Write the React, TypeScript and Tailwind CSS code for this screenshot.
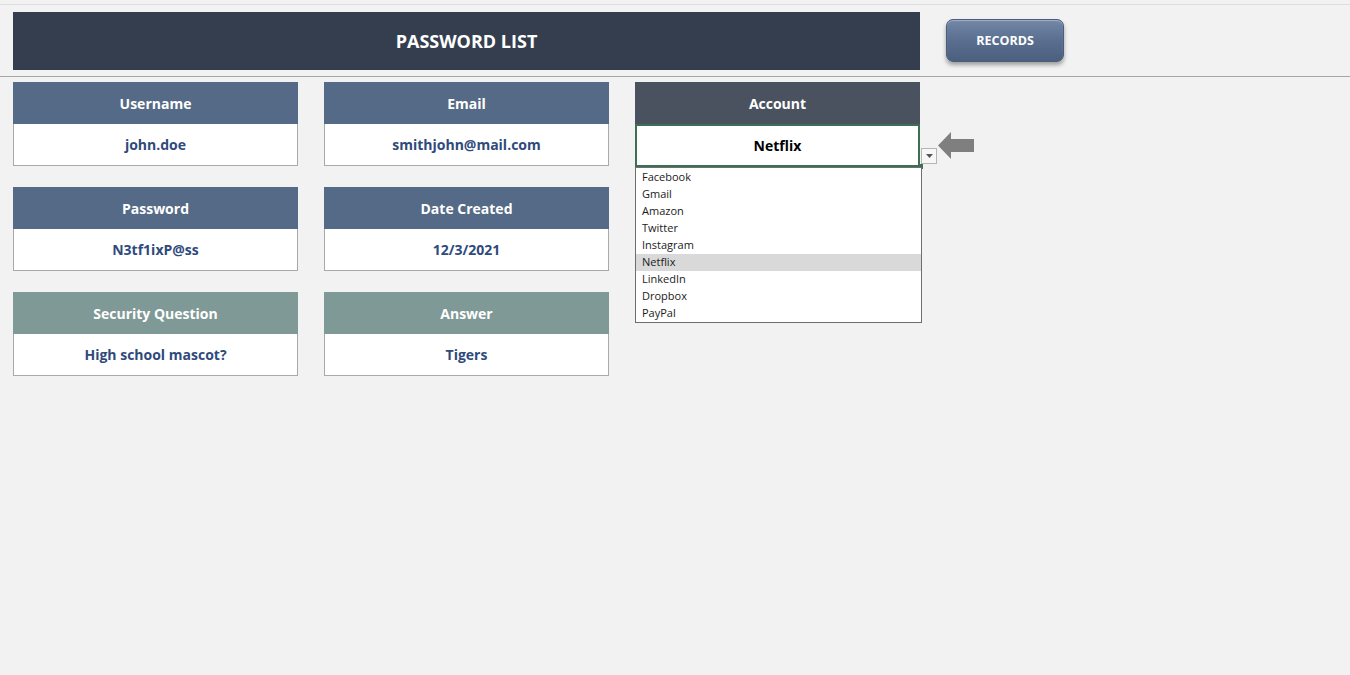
const cards = [
  { label: "Username", value: "john.doe", head: "bg-[#556a86]" },
  { label: "Email", value: "smithjohn@mail.com", head: "bg-[#556a86]" },
  { label: "Password", value: "N3tf1ixP@ss", head: "bg-[#556a86]" },
  { label: "Date Created", value: "12/3/2021", head: "bg-[#556a86]" },
  { label: "Security Question", value: "High school mascot?", head: "bg-[#7f9996]" },
  { label: "Answer", value: "Tigers", head: "bg-[#7f9996]" },
];

const accounts = ["Facebook", "Gmail", "Amazon", "Twitter", "Instagram", "Netflix", "LinkedIn", "Dropbox", "PayPal"];

function Field({ label, value, head }: { label: string; value: string; head: string }) {
  return (
    <div className="flex flex-col">
      <div className={`flex h-[42px] items-center justify-center text-[14px] font-bold text-white ${head}`}>
        {label}
      </div>
      <div className="flex h-[42px] items-center justify-center border border-t-0 border-[#a9a9a9] bg-white text-[14px] font-bold text-[#2f4a7c]">
        {value}
      </div>
    </div>
  );
}

export default function App() {
  return (
    <div className="min-h-screen bg-[#f2f2f2] font-['Open_Sans',sans-serif]">
      <div className="h-[5px] border-b border-[#dedede]" />

      <div className="flex items-start px-[13px] pt-[7px] pb-[6px]">
        <div className="flex h-[58px] w-[907px] items-center justify-center bg-[#343e4f] text-[18px] font-bold text-white">
          PASSWORD LIST
        </div>
        <button className="ml-[26px] mt-[7px] flex h-[43px] w-[118px] items-center justify-center rounded-[7px] border border-[#4a5d7a] bg-gradient-to-b from-[#7387a6] via-[#5a6f90] to-[#4b5f7e] pt-[2px] text-[12.5px] font-bold text-white shadow-[0_3px_4px_rgba(0,0,0,0.35),inset_0_1px_1px_rgba(255,255,255,0.35)]">
          RECORDS
        </button>
      </div>

      <div className="border-t border-[#a6a6a6]" />

      <div className="flex gap-[26px] px-[13px] pt-[5px]">
        <div className="grid w-[596px] grid-cols-[285px_285px] gap-x-[26px] gap-y-[21px]">
          {cards.map((c) => (
            <Field key={c.label} {...c} />
          ))}
        </div>

        <div className="relative w-[285px]">
          <div className="flex h-[42px] items-center justify-center bg-[#4a5260] text-[14px] font-bold text-white">
            Account
          </div>
          <div className="flex h-[43px] items-center justify-center border-2 border-[#3c6f54] bg-white text-[14px] font-bold text-black">
            Netflix
          </div>

          <div className="absolute left-[283px] top-[82px] h-[5px] w-[5px] bg-[#3c6f54]" />

          <div className="absolute left-[286px] top-[66px] flex h-[16px] w-[16px] items-center justify-center border border-[#b5b5b5] bg-[#f7f7f7]">
            <svg width="7" height="4" viewBox="0 0 7 4">
              <polygon points="0,0 7,0 3.5,4" fill="#555" />
            </svg>
          </div>

          <svg className="absolute left-[303px] top-[50px]" width="37" height="27" viewBox="0 0 37 27">
            <polygon points="0,13.5 13,0 13,7 36,7 36,20 13,20 13,27" fill="#7f7f7f" />
          </svg>

          <div className="absolute left-0 top-[85px] flex w-[287px] flex-col border border-[#6e6e6e] bg-white pt-[1px]">
            {accounts.map((a) => (
              <div
                key={a}
                className={`flex h-[17px] items-center pl-[6px] text-[11px] text-[#1a1a1a] ${a === "Netflix" ? "bg-[#d9d9d9]" : ""}`}
              >
                {a}
              </div>
            ))}
          </div>
        </div>
      </div>
    </div>
  );
}
